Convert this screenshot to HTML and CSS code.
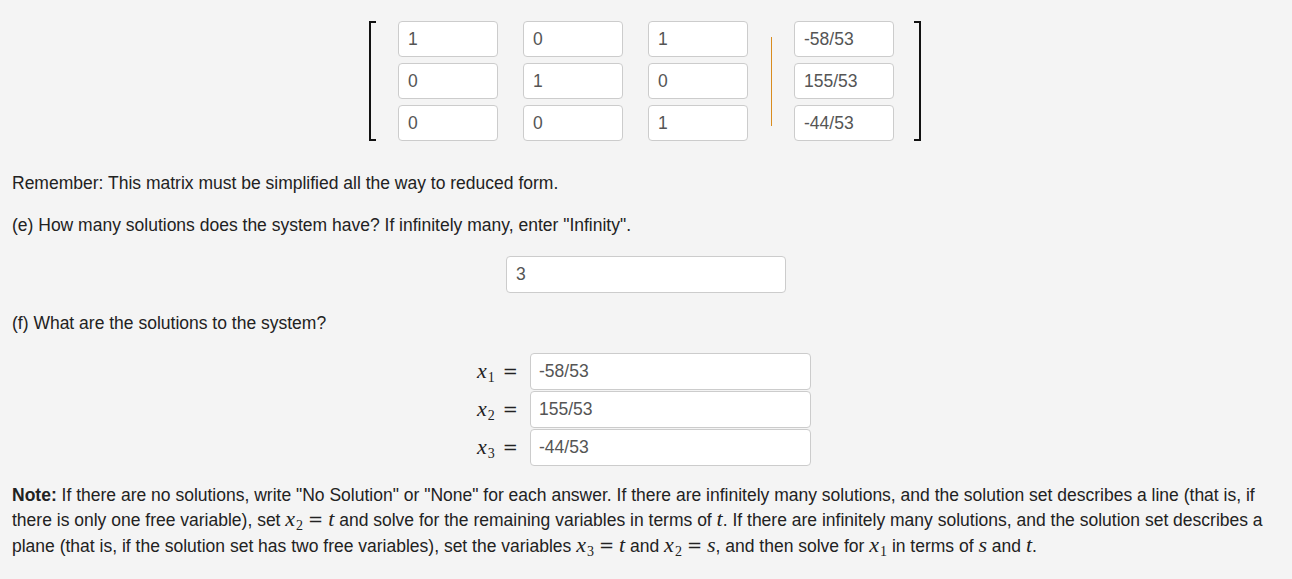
FILE: index.html
```html
<!DOCTYPE html>
<html>
<head>
<meta charset="utf-8">
<link rel="stylesheet" href="styles.css">
</head>
<body>
<div class="page">
  <div class="matrix-wrap">
    <div class="matrix">
      <div class="bracket bracket-left"></div>
      <div class="cols">
        <div class="col">
          <div class="cell">1</div>
          <div class="cell">0</div>
          <div class="cell">0</div>
        </div>
        <div class="col">
          <div class="cell">0</div>
          <div class="cell">1</div>
          <div class="cell">0</div>
        </div>
        <div class="col">
          <div class="cell">1</div>
          <div class="cell">0</div>
          <div class="cell">1</div>
        </div>
        <div class="separator"></div>
        <div class="col">
          <div class="cell">-58/53</div>
          <div class="cell">155/53</div>
          <div class="cell">-44/53</div>
        </div>
      </div>
      <div class="bracket bracket-right"></div>
    </div>
  </div>

  <p class="text remember">Remember: This matrix must be simplified all the way to reduced form.</p>
  <p class="text question-e">(e) How many solutions does the system have? If infinitely many, enter "Infinity".</p>

  <div class="answer-row">
    <div class="answer-box">3</div>
  </div>

  <p class="text question-f">(f) What are the solutions to the system?</p>

  <div class="solutions">
    <div class="sol-row">
      <span class="sol-label"><span class="mi">x</span><span class="sub">1</span><span class="eq">=</span></span>
      <div class="sol-box">-58/53</div>
    </div>
    <div class="sol-row">
      <span class="sol-label"><span class="mi">x</span><span class="sub">2</span><span class="eq">=</span></span>
      <div class="sol-box">155/53</div>
    </div>
    <div class="sol-row">
      <span class="sol-label"><span class="mi">x</span><span class="sub">3</span><span class="eq">=</span></span>
      <div class="sol-box">-44/53</div>
    </div>
  </div>

  <p class="text note"><b>Note:</b> If there are no solutions, write "No Solution" or "None" for each answer. If there are infinitely many solutions, and the solution set describes a line (that is, if there is only one free variable), set <span class="m"><span class="mi">x</span><span class="sub">2</span><span class="meq">=</span><span class="mi">t</span></span> and solve for the remaining variables in terms of <span class="m"><span class="mi">t</span></span>. If there are infinitely many solutions, and the solution set describes a plane (that is, if the solution set has two free variables), set the variables <span class="m"><span class="mi">x</span><span class="sub">3</span><span class="meq">=</span><span class="mi">t</span></span> and <span class="m"><span class="mi">x</span><span class="sub">2</span><span class="meq">=</span><span class="mi">s</span></span>, and then solve for <span class="m"><span class="mi">x</span><span class="sub">1</span></span> in terms of <span class="m"><span class="mi">s</span></span> and <span class="m"><span class="mi">t</span></span>.</p>
</div>
</body>
</html>
```

FILE: styles.css
```css
html, body {
  margin: 0;
  padding: 0;
  background: #f4f4f4;
}

body {
  font-family: "Liberation Sans", Arial, sans-serif;
  font-size: 17.5px;
  color: #222;
}

.page {
  padding: 0 12px;
}

.matrix-wrap {
  display: flex;
  justify-content: center;
  padding-top: 21px;
  padding-right: 2px;
}

.matrix {
  display: flex;
  align-items: stretch;
}

.bracket {
  width: 5px;
  border-top: 2px solid #111;
  border-bottom: 2px solid #111;
}

.bracket-left {
  border-left: 2px solid #111;
  margin-right: 22px;
}

.bracket-right {
  border-right: 2px solid #111;
  margin-left: 20px;
}

.cols {
  display: flex;
  gap: 25px;
  align-items: center;
}

.col {
  display: flex;
  flex-direction: column;
  gap: 6px;
}

.cell {
  box-sizing: border-box;
  width: 100px;
  height: 36px;
  padding: 0 9px;
  line-height: 34px;
  background: #fff;
  border: 1px solid #ccc;
  border-radius: 4px;
  color: #555;
}

.separator {
  width: 1px;
  height: 89px;
  background: #d98c1f;
  margin: 0 -3px 0 -2px;
}

.text {
  margin: 0;
  line-height: 25.5px;
}

.remember {
  margin-top: 30px;
}

.question-e {
  margin-top: 16px;
}

.answer-row {
  display: flex;
  justify-content: center;
  margin-top: 18px;
}

.answer-box {
  box-sizing: border-box;
  width: 280px;
  height: 37px;
  padding: 0 9px;
  line-height: 35px;
  background: #fff;
  border: 1px solid #ccc;
  border-radius: 4px;
  color: #555;
}

.question-f {
  margin-top: 18px;
}

.solutions {
  display: flex;
  flex-direction: column;
  gap: 1px;
  margin-top: 16px;
  padding-left: 465px;
}

.sol-row {
  display: flex;
  align-items: center;
}

.sol-label {
  width: 53px;
  color: #222;
  white-space: nowrap;
  line-height: 1;
}

.sol-box {
  box-sizing: border-box;
  width: 281px;
  height: 37px;
  padding: 0 8px;
  line-height: 35px;
  background: #fff;
  border: 1px solid #ccc;
  border-radius: 4px;
  color: #555;
}

.mi {
  font-family: "Liberation Serif", "Times New Roman", serif;
  font-style: italic;
  font-size: 22px;
  line-height: 1;
}

.sub {
  font-family: "Liberation Serif", "Times New Roman", serif;
  font-size: 14px;
  position: relative;
  top: 4px;
  margin-left: 1px;
  line-height: 1;
}

.eq {
  font-family: "DejaVu Serif", serif;
  font-size: 18px;
  margin-left: 8px;
  line-height: 1;
}

.meq {
  font-family: "DejaVu Serif", serif;
  font-size: 18px;
  margin: 0 5px;
  line-height: 1;
}

.m {
  white-space: nowrap;
  line-height: 1;
}

.note {
  margin-top: 17px;
}
```
